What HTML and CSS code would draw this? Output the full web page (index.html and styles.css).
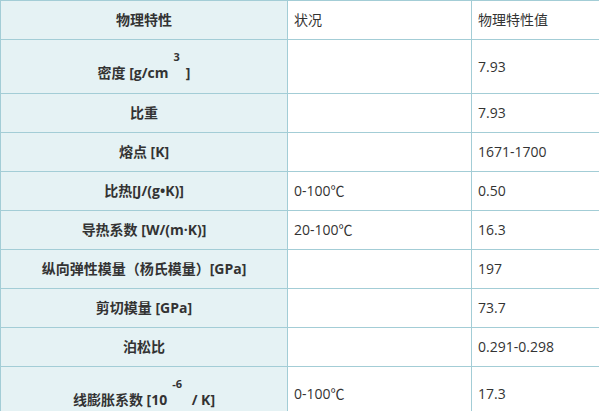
FILE: index.html
```html
<!DOCTYPE html>
<html lang="zh">
<head>
<meta charset="utf-8">
<link rel="stylesheet" href="styles.css">
</head>
<body>
<table class="props">
  <colgroup><col class="c1"><col class="c2"><col class="c3"></colgroup>
  <tr><td class="name">物理特性</td><td>状况</td><td>物理特性值</td></tr>
  <tr class="tall"><td class="name">密度 [g/cm<sup class="sup">3</sup>]</td><td></td><td>7.93</td></tr>
  <tr><td class="name">比重</td><td></td><td>7.93</td></tr>
  <tr><td class="name">熔点 [K]</td><td></td><td>1671-1700</td></tr>
  <tr><td class="name">比热[J/(g•K)]</td><td>0-100℃</td><td>0.50</td></tr>
  <tr><td class="name">导热系数 [W/(m·K)]</td><td>20-100℃</td><td>16.3</td></tr>
  <tr><td class="name">纵向弹性模量（杨氏模量）[GPa]</td><td></td><td>197</td></tr>
  <tr><td class="name">剪切模量 [GPa]</td><td></td><td>73.7</td></tr>
  <tr><td class="name">泊松比</td><td></td><td>0.291-0.298</td></tr>
  <tr class="tall"><td class="name">线膨胀系数 [10<sup class="sup">-6</sup> / K]</td><td>0-100℃</td><td>17.3</td></tr>
</table>
</body>
</html>
```
FILE: styles.css
```css
html, body {
  margin: 0;
  padding: 0;
  background: #ffffff;
  overflow: hidden;
}
body {
  font-family: "Open Sans", "Noto Sans CJK SC", sans-serif;
  font-size: 14px;
  color: #333333;
}
.props {
  border-collapse: collapse;
  width: 720px;
  table-layout: fixed;
  margin: 0;
}
.c1 { width: 287px; }
.c2 { width: 184px; }
.c3 { width: 249px; }
.props td {
  border: 1px solid #a3cdd6;
  height: 38px;
  padding: 0 6px;
  vertical-align: middle;
  line-height: 20px;
  text-align: left;
}
.props td.name {
  background: #e5f2f4;
  text-align: center;
  font-weight: bold;
}
.props tr.tall td {
  height: 53px;
}
.sup {
  font-size: 11px;
  line-height: 11px;
  vertical-align: 17px;
  margin: 0 6px 0 5px;
}
```
